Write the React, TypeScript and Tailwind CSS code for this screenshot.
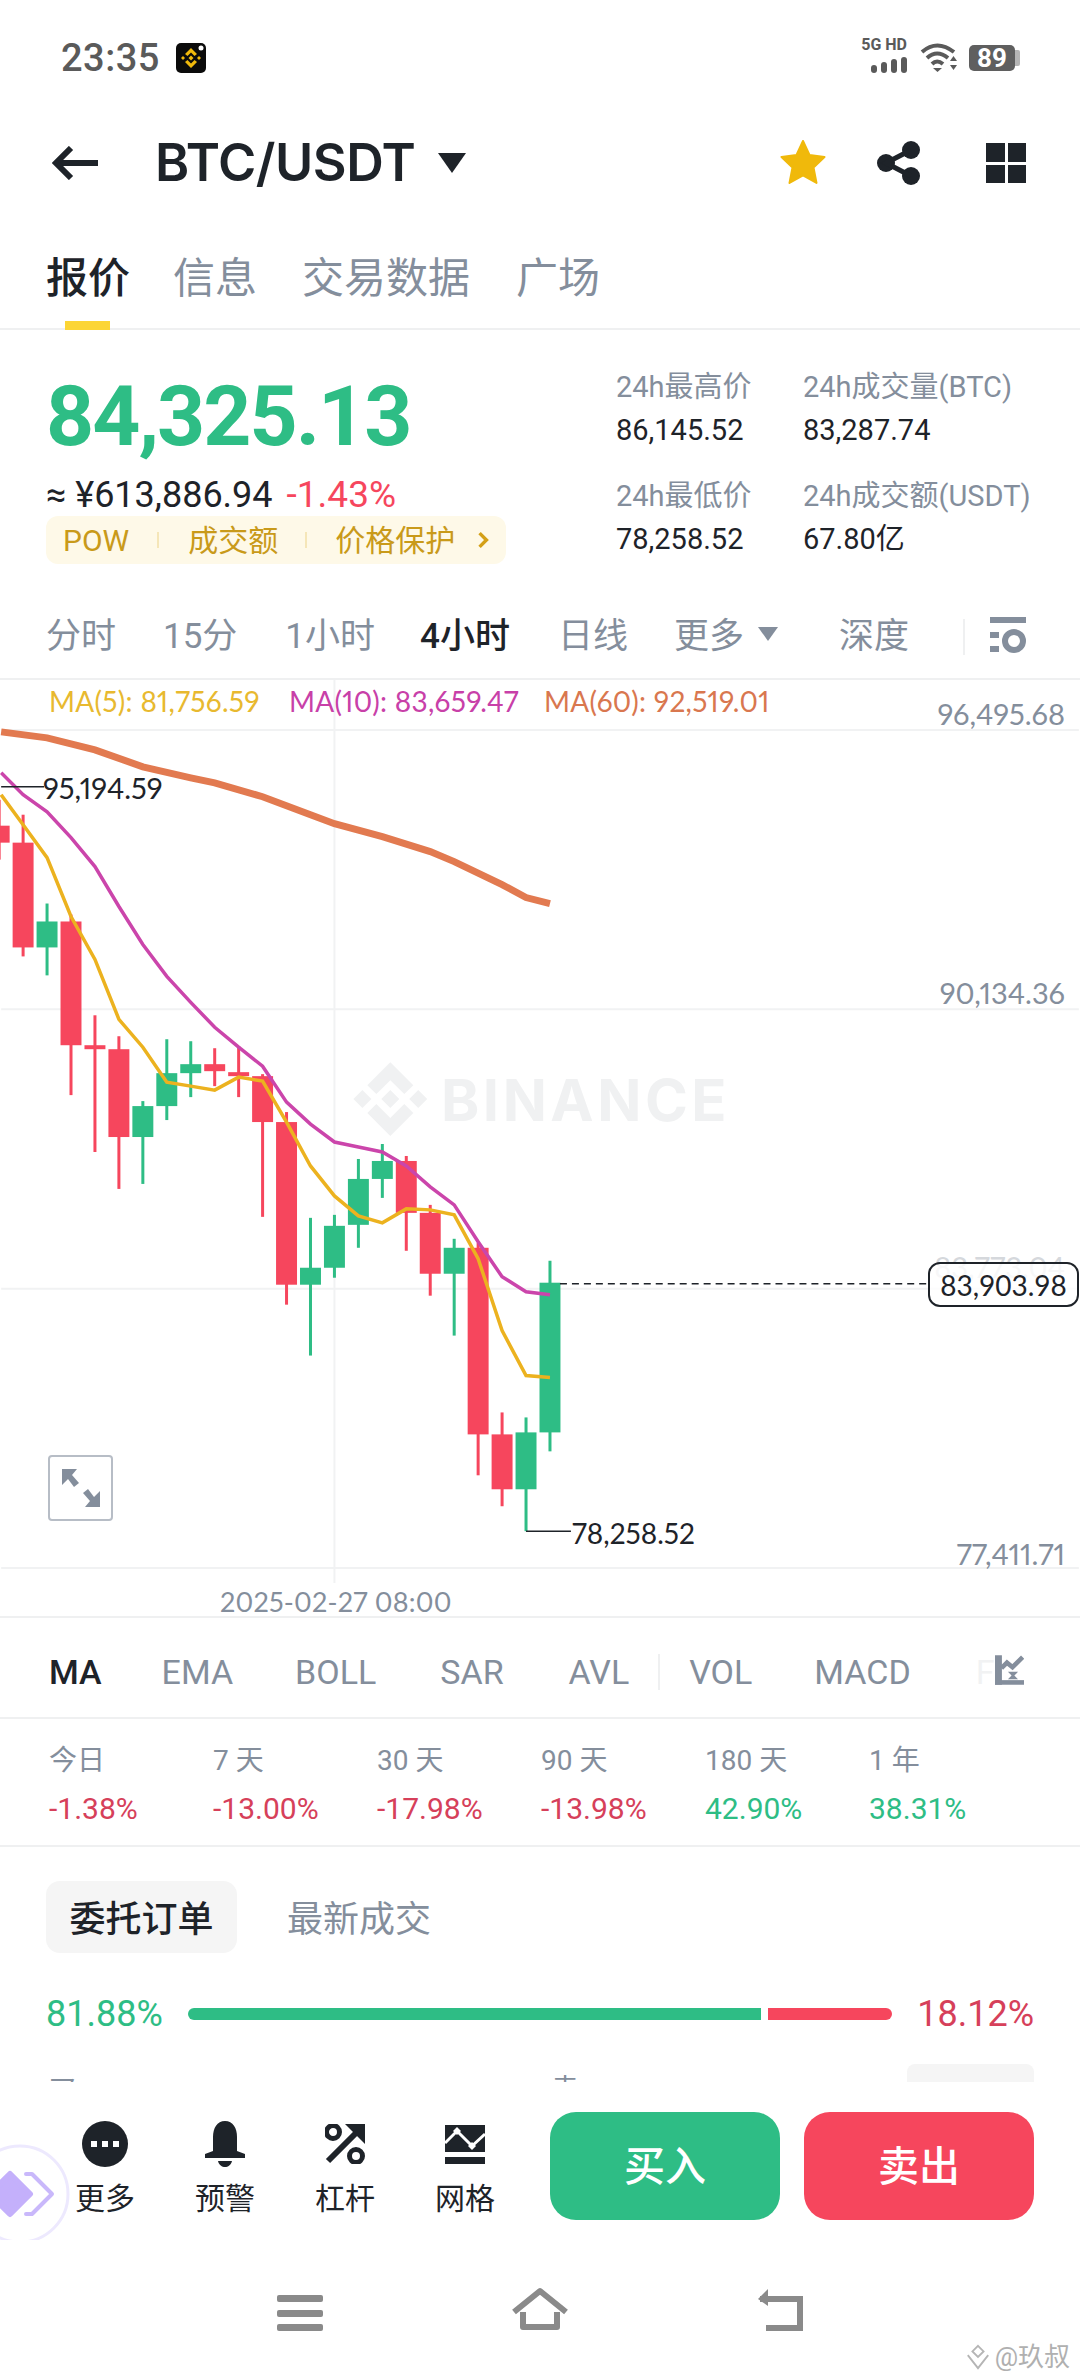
import React from "react";

const GREEN = "#2ebd85";
const RED = "#f6465d";

// x centre index step 24px, starting at x=-2: [high, top, bottom, low, green?]
const candles: [number, number, number, number, number][] = [
  [800, 826, 843, 860, 0],
  [815, 843, 948, 957, 0],
  [904, 922, 948, 976, 1],
  [915, 922, 1046, 1096, 0],
  [1016, 1046, 1050, 1153, 0],
  [1037, 1050, 1138, 1190, 0],
  [1102, 1107, 1138, 1185, 1],
  [1040, 1074, 1107, 1121, 1],
  [1042, 1065, 1074, 1098, 1],
  [1049, 1065, 1072, 1087, 0],
  [1047, 1073, 1077, 1098, 0],
  [1075, 1077, 1123, 1218, 0],
  [1113, 1123, 1286, 1306, 0],
  [1219, 1269, 1286, 1357, 1],
  [1216, 1227, 1269, 1279, 1],
  [1160, 1180, 1226, 1249, 1],
  [1145, 1162, 1180, 1199, 1],
  [1157, 1162, 1214, 1252, 0],
  [1206, 1214, 1275, 1297, 0],
  [1240, 1249, 1275, 1337, 1],
  [1244, 1249, 1436, 1477, 0],
  [1414, 1436, 1491, 1508, 0],
  [1419, 1434, 1491, 1533, 1],
  [1262, 1284, 1434, 1453, 1],
];

const ma5 = "0,795 22,825 46,858 70,917 94,960 118,1020 142,1048 166,1083 190,1087 214,1091 238,1078 262,1082 286,1123 310,1167 334,1197 358,1217 382,1224 406,1210 430,1211 454,1216 478,1260 502,1332 526,1377 550,1379";
const ma10 = "0,773 22,795 46,812 70,838 94,867 118,907 142,945 166,977 190,1003 214,1028 238,1048 262,1067 286,1103 310,1125 334,1143 358,1148 382,1153 406,1167 430,1188 454,1206 478,1243 502,1278 526,1293 550,1296";
const ma60 = "0,732 46,738 94,750 142,767 190,778 214,783 262,797 310,815 334,824 382,837 430,852 454,862 502,885 526,898 550,904";

const Chart = () => (
  <svg viewBox="0 680 1080 938" className="absolute inset-0 w-full h-full">
    {[730, 1010, 1290, 1570].map((y) => (
      <line key={y} x1="0" x2="1080" y1={y} y2={y} stroke="#f1f2f3" strokeWidth="2" />
    ))}
    <line x1="334" x2="334" y1="680" y2="1585" stroke="#f1f2f3" strokeWidth="2" />
    <g fill="#f0f1f2">
      <polygon points="390,1063 413,1086 404,1095 390,1081 376,1095 367,1086" />
      <polygon points="390,1137 413,1114 404,1105 390,1119 376,1105 367,1114" />
      <polygon points="390,1091 399,1100 390,1109 381,1100" />
      <polygon points="362,1091 371,1100 362,1109 353,1100" />
      <polygon points="418,1091 427,1100 418,1109 409,1100" />
    </g>
    {candles.map(([h, t, b, l, g], i) => {
      const x = -2 + i * 24;
      const c = g ? GREEN : RED;
      return (
        <g key={i} fill={c}>
          <rect x={x - 1.5} y={h} width="3" height={l - h} />
          <rect x={x - 10.5} y={t} width="21" height={b - t} />
        </g>
      );
    })}
    <polyline points={ma60} fill="none" stroke="#e27a50" strokeWidth="7" />
    <polyline points={ma10} fill="none" stroke="#cb45ab" strokeWidth="3.5" />
    <polyline points={ma5} fill="none" stroke="#ecb21f" strokeWidth="3.5" />
    <line x1="0" x2="43" y1="787" y2="787" stroke="#1e2329" strokeWidth="1.5" />
    <line x1="526" x2="571" y1="1533" y2="1533" stroke="#1e2329" strokeWidth="1.5" />
    <line x1="560" x2="928" y1="1285" y2="1285" stroke="#1e2329" strokeWidth="1.5" strokeDasharray="7 5" />
  </svg>
);

const Label = ({ cls, children }: { cls: string; children: React.ReactNode }) => (
  <span className={`absolute whitespace-nowrap leading-none proportional-nums ${cls}`}>{children}</span>
);

const Stat = ({ label, value }: { label: string; value: string }) => (
  <div className="flex flex-col">
    <span className="text-[29px] leading-[34px] text-[#848e9c] whitespace-nowrap">{label}</span>
    <span className="text-[29px] leading-[34px] mt-[9px] text-[#1e2329] whitespace-nowrap">{value}</span>
  </div>
);

const Returns = ({ label, value, up }: { label: string; value: string; up?: boolean }) => (
  <div className="flex flex-col">
    <span className="text-[28px] leading-[34px] text-[#848e9c] whitespace-nowrap">{label}</span>
    <span className={`text-[30px] leading-[34px] mt-[14px] whitespace-nowrap ${up ? "text-[#2ebd85]" : "text-[#d6405a]"}`}>{value}</span>
  </div>
);

const Tool = ({ icon, label }: { icon: React.ReactNode; label: string }) => (
  <div className="w-[120px] mt-[9px] flex flex-col items-center">
    <div className="h-[46px] flex items-center justify-center">{icon}</div>
    <span className="mt-[14px] text-[30px] leading-[36px] text-[#1e2329] whitespace-nowrap">{label}</span>
  </div>
);

export default function App() {
  return (
    <div
      className="w-[1080px] h-[2376px] bg-white overflow-hidden flex flex-col relative"
      style={{ fontFamily: 'Roboto, "Noto Sans CJK SC", sans-serif' }}
    >
      {/* status bar */}
      <div className="h-[100px] shrink-0 flex items-start pl-[61px] pr-[60px] pt-[38px]">
        <span className="text-[38px] leading-[40px] tracking-[0.5px] font-medium text-[#5a5a5a]">23:35</span>
        <svg viewBox="0 0 30 30" className="w-[30px] h-[30px] ml-[16px] mt-[5px]">
          <rect width="30" height="30" rx="5" fill="#0b0b0b" />
          <g fill="#f0b90b">
            <polygon points="15,5 21,11 18.5,13 15,9.5 11.500,13 9,11" />
            <polygon points="15,25 21,19 18.5,17 15,20.500 11.500,17 9,19" />
            <polygon points="15,12.500 17.500,15 15,17.500 12.500,15" />
            <polygon points="7,13 9,15 7,17 5,15" />
            <polygon points="23,13 25,15 23,17 21,15" />
          </g>
          <circle cx="25" cy="5" r="2.500" fill="#fff" />
        </svg>
        <div className="ml-auto flex items-start">
          <div className="flex flex-col items-end w-[48px] mt-[0px]">
            <span className="text-[16px] leading-[14px] font-bold text-[#5a5a5a] whitespace-nowrap">5G HD</span>
            <svg viewBox="0 0 36 16" className="w-[36px] h-[16px] mt-[5px]">
              <g fill="#5a5a5a">
                <rect x="0" y="8" width="6" height="8" rx="3" />
                <rect x="10" y="5" width="6" height="11" rx="3" />
                <rect x="20" y="2" width="6" height="14" rx="3" />
                <rect x="30" y="0" width="6" height="16" rx="3" />
              </g>
            </svg>
          </div>
          <svg viewBox="0 0 38 30" className="w-[38px] h-[30px] ml-[13px] mt-[5px]" fill="none" stroke="#5a5a5a" strokeWidth="4">
            <path d="M2 9 Q17 -4 34 9" />
            <path d="M7 15 Q17 6 28 15" />
            <path d="M12 21 Q17 16 23 21" />
            <polygon points="13,25 22,25 17.500,29" fill="#5a5a5a" stroke="none" />
            <polygon points="30,18 37,18 33.500,13" fill="#5a5a5a" stroke="none" />
            <polygon points="30,22 37,22 33.500,27" fill="#5a5a5a" stroke="none" />
          </svg>
          <div className="ml-[11px] mt-[7px] flex items-center">
            <div className="w-[46px] h-[26px] rounded-[5px] bg-[#5f5f5f] flex items-center justify-center text-white text-[26px] font-bold leading-none">89</div>
            <div className="w-[5px] h-[16px] bg-[#b5b5b5] rounded-r-[2px]" />
          </div>
        </div>
      </div>

      {/* nav */}
      <div className="h-[126px] shrink-0 flex items-center pb-[0px]">
        <svg viewBox="0 0 46 34" className="w-[46px] h-[34px] ml-[52px]" fill="none" stroke="#1e2329" strokeWidth="6">
          <path d="M46 17H5" />
          <path d="M19 2L4 17l15 15" />
        </svg>
        <span className="ml-[57px] text-[52px] leading-[56px] font-semibold tracking-[-0.5px] text-[#1e2329]" style={{ fontFamily: "Inter, sans-serif" }}>BTC/USDT</span>
        <svg viewBox="0 0 28 20" className="w-[28px] h-[20px] ml-[23px]"><polygon points="0,0 28,0 14,20" fill="#1e2329" /></svg>
        <svg viewBox="0 0 46 46" className="w-[46px] h-[46px] ml-auto">
          <path d="M23 1l6.500 14 15 2-11 10.500 3 15.500L23 35.500 9.500 43l3-15.500L1.500 17l15-2z" fill="#f0b90b" stroke="#f0b90b" strokeWidth="2" strokeLinejoin="round" />
        </svg>
        <svg viewBox="0 0 44 44" className="w-[44px] h-[44px] ml-[51px]" fill="#1e2329">
          <circle cx="34" cy="9" r="9" /><circle cx="9" cy="22" r="9" /><circle cx="34" cy="35" r="9" />
          <path d="M34 9L9 22l25 13" fill="none" stroke="#1e2329" strokeWidth="5" />
        </svg>
        <div className="grid grid-cols-2 gap-[3px] w-[40px] h-[40px] ml-[65px] mr-[54px]">
          <div className="bg-[#1e2329]" /><div className="bg-[#1e2329]" /><div className="bg-[#1e2329]" /><div className="bg-[#1e2329]" />
        </div>
      </div>

      {/* tabs */}
      <div className="h-[104px] shrink-0 border-b-2 border-[#eff0f1] flex items-start pl-[46px] pt-[24px] text-[42px] leading-[58px] text-[#848e9c]">
        <div className="relative h-[80px]">
          <span className="font-medium text-[#1e2329]">报价</span>
          <div className="absolute left-[19px] bottom-0 w-[45px] h-[9px] bg-[#fcd535]" />
        </div>
        <span className="ml-[43px]">信息</span>
        <span className="ml-[45px]">交易数据</span>
        <span className="ml-[46px]">广场</span>
      </div>

      {/* price block */}
      <div className="h-[259px] shrink-0 flex pl-[46px]">
        <div className="w-[570px] shrink-0 pt-[43px]">
          <div className="text-[84px] leading-[88px] font-bold text-[#2ebd85] whitespace-nowrap tracking-[-2px]">84,325.13</div>
          <div className="mt-[15px] flex items-center text-[35px] leading-[38px] whitespace-nowrap">
            <span className="text-[#1e2329] text-[36px]">≈ ¥613,886.94</span>
            <span className="ml-[14px] text-[#f6465d] text-[37px]">-1.43%</span>
          </div>
          <div className="mt-[2px] w-[460px] h-[48px] rounded-[12px] bg-[#fef9e8] flex items-center pl-[17px] text-[30px] text-[#c99a1a] whitespace-nowrap">
            <span>POW</span>
            <span className="ml-[28px] w-[2px] h-[16px] bg-[#f5e6b8]" />
            <span className="ml-[29px]">成交额</span>
            <span className="ml-[27px] w-[2px] h-[16px] bg-[#f5e6b8]" />
            <span className="ml-[28px]">价格保护</span>
            <svg viewBox="0 0 14 20" className="w-[12px] h-[18px] ml-[22px]" fill="none" stroke="#d4a017" strokeWidth="4"><path d="M3 2l8 8-8 8" /></svg>
          </div>
        </div>
        <div className="pt-[40px] grid grid-cols-[187px_auto] gap-y-[32px] content-start">
          <Stat label="24h最高价" value="86,145.52" />
          <Stat label="24h成交量(BTC)" value="83,287.74" />
          <Stat label="24h最低价" value="78,258.52" />
          <Stat label="24h成交额(USDT)" value="67.80亿" />
        </div>
      </div>

      {/* intervals */}
      <div className="h-[91px] shrink-0 border-b-2 border-[#eff0f1] flex items-center text-[35px] text-[#848e9c] whitespace-nowrap leading-none pt-[6px]">
        <span className="ml-[46px]">分时</span>
        <span className="ml-[47px]">15分</span>
        <span className="ml-[48px]">1小时</span>
        <span className="ml-[45px] font-medium text-[#1e2329]">4小时</span>
        <span className="ml-[48px]">日线</span>
        <span className="ml-[46px]">更多</span>
        <svg viewBox="0 0 20 14" className="w-[20px] h-[14px] ml-[14px] mb-[6px]"><polygon points="0,0 20,0 10,14" fill="#848e9c" /></svg>
        <span className="ml-[61px]">深度</span>
        <span className="ml-[54px] w-[2px] h-[36px] bg-[#eff0f1]" />
        <svg viewBox="0 0 36 36" className="w-[36px] h-[36px] ml-[25px] mb-[4px]" fill="#848e9c">
          <rect x="0" y="0" width="36" height="6" />
          <rect x="0" y="15" width="9" height="6" />
          <rect x="0" y="29" width="9" height="6" />
          <circle cx="24" cy="24" r="9" fill="none" stroke="#848e9c" strokeWidth="6" />
        </svg>
      </div>

      {/* chart */}
      <div className="h-[938px] shrink-0 relative border-b-2 border-[#eff0f1]">
        <Chart />
        <div className="relative flex text-[28px] tracking-[0.3px] leading-[32px] pt-[5px] pl-[49px] whitespace-nowrap proportional-nums" style={{ fontFamily: "Lato, sans-serif" }}>
          <span className="text-[#e8b92f] w-[240px]">MA(5): 81,756.59</span>
          <span className="text-[#c840a8] w-[255px]">MA(10): 83,659.47</span>
          <span className="text-[#d9774f]">MA(60): 92,519.01</span>
        </div>
        <span
          className="absolute left-[441px] top-[386px] text-[58px] leading-[68px] font-bold tracking-[3.5px] text-[#f0f1f2]"
          style={{ fontFamily: "Inter, sans-serif" }}
        >BINANCE</span>
        <div style={{ fontFamily: "Lato, sans-serif" }}>
          <Label cls="right-[15px] top-[19px] text-[29px] text-[#848e9c]">96,495.68</Label>
          <Label cls="right-[15px] top-[298px] text-[29px] text-[#848e9c]">90,134.36</Label>
          <Label cls="right-[15px] top-[859px] text-[29px] text-[#848e9c]">77,411.71</Label>
          <Label cls="right-[15px] top-[572px] text-[29px] text-[#d5d8dc]">83,773.04</Label>
          <Label cls="left-[43px] top-[93px] text-[29px] text-[#1e2329]">95,194.59</Label>
          <Label cls="left-[572px] top-[839px] text-[28px] text-[#1e2329]">78,258.52</Label>
          <Label cls="left-[220px] top-[908px] text-[27px] tracking-[0.2px] text-[#848e9c]">2025-02-27 08:00</Label>
          <div className="absolute left-[928px] top-[582px] w-[151px] h-[45px] rounded-[12px] border-2 border-[#1e2329] bg-white/80 flex items-center justify-center text-[28px] text-[#1e2329] leading-none">83,903.98</div>
        </div>
        <div className="absolute left-[48px] top-[775px] w-[65px] h-[66px] rounded-[4px] border-2 border-[#b7bdc6] flex items-center justify-center">
          <svg viewBox="0 0 38 38" className="w-[38px] h-[38px]" fill="#848e9c">
            <polygon points="0,0 15,0 10,6 17,14 12,18 6,10 0,16" />
            <polygon points="38,38 23,38 28,32 21,24 26,20 32,28 38,22" />
          </svg>
        </div>
      </div>

      {/* indicators */}
      <div className="h-[101px] shrink-0 border-b-2 border-[#eff0f1] flex items-center text-[34px] text-[#848e9c] whitespace-nowrap leading-none pt-[8px]">
        <span className="ml-[49px] font-medium text-[#1e2329]">MA</span>
        <span className="ml-[60px]">EMA</span>
        <span className="ml-[62px]">BOLL</span>
        <span className="ml-[64px]">SAR</span>
        <span className="ml-[65px]">AVL</span>
        <span className="ml-[29px] w-[2px] h-[36px] bg-[#eff0f1]" />
        <span className="ml-[29px]">VOL</span>
        <span className="ml-[62px]">MACD</span>
        <span className="ml-[65px] text-[#f1f2f3]">F</span>
        <svg viewBox="0 0 32 32" className="w-[32px] h-[32px] ml-auto mr-[56px] mb-[4px]" fill="#848e9c">
          <rect x="0" y="0" width="7.500" height="32" />
          <rect x="0" y="27" width="32" height="5" />
          <polyline points="7,14 13,8 19,13 30,2" fill="none" stroke="#848e9c" strokeWidth="5" />
          <polygon points="14,18 25,18 21,22 25,26 14,26 18,22" />
        </svg>
      </div>

      {/* returns */}
      <div className="h-[128px] shrink-0 border-b-2 border-[#eff0f1] grid grid-cols-[164px_164px_164px_164px_164px_auto] pl-[49px] pt-[25px]">
        <Returns label="今日" value="-1.38%" />
        <Returns label="7 天" value="-13.00%" />
        <Returns label="30 天" value="-17.98%" />
        <Returns label="90 天" value="-13.98%" />
        <Returns label="180 天" value="42.90%" up />
        <Returns label="1 年" value="38.31%" up />
      </div>

      {/* order book, cut by the bottom bar */}
      <div className="flex-1 min-h-0 overflow-hidden px-[46px] pt-[34px]">
        <div className="flex items-center">
          <div className="w-[191px] h-[72px] rounded-[14px] bg-[#f5f5f5] flex items-center justify-center pt-[6px] text-[36px] leading-none font-medium text-[#1e2329]">委托订单</div>
          <span className="ml-[50px] pt-[6px] text-[36px] leading-none text-[#848e9c]">最新成交</span>
        </div>
        <div className="mt-[44px] flex items-center h-[34px]">
          <span className="w-[142px] text-[36px] leading-none text-[#2ebd85]">81.88%</span>
          <div className="w-[573px] h-[12px] rounded-l-full bg-[#2ebd85]" />
          <div className="w-[124px] h-[12px] ml-[7px] rounded-r-full bg-[#f6465d]" />
          <span className="ml-auto text-[36px] leading-none text-[#d6405a]">18.12%</span>
        </div>
        <div className="mt-[33px] flex text-[28px] leading-[34px] text-[#848e9c]">
          <span className="mt-[11px] ml-[2px]">买</span>
          <span className="ml-[475px] mt-[9px]">卖</span>
          <div className="ml-auto w-[127px] h-[52px] rounded-[8px] bg-[#f5f5f5]" />
        </div>
      </div>

      {/* bottom actions */}
      <div className="h-[158px] shrink-0 bg-white flex items-start pt-[30px] pl-[45px] pr-[46px] relative">
        <Tool
          label="更多"
          icon={
            <svg viewBox="0 0 46 46" className="w-[46px] h-[46px]">
              <circle cx="23" cy="23" r="23" fill="#1e2329" />
              <g fill="#fff"><rect x="9" y="20" width="6" height="6" /><rect x="20" y="20" width="6" height="6" /><rect x="31" y="20" width="6" height="6" /></g>
            </svg>
          }
        />
        <Tool
          label="预警"
          icon={
            <svg viewBox="0 0 40 46" className="w-[40px] h-[46px]" fill="#1e2329">
              <path d="M20 0C28 0 32 7 32 16V30L40 33V37H0V33L8 30V16C8 7 12 0 20 0Z" />
              <path d="M13 40H27C26 44 23 46 20 46S14 44 13 40Z" />
            </svg>
          }
        />
        <Tool
          label="杠杆"
          icon={
            <svg viewBox="0 0 40 40" className="w-[40px] h-[40px]" fill="none" stroke="#1e2329">
              <path d="M3 37L31 9" strokeWidth="6" />
              <polygon points="20,0 40,0 40,20" fill="#1e2329" stroke="none" />
              <circle cx="8" cy="8" r="6.500" strokeWidth="5" />
              <circle cx="31" cy="32" r="6.500" strokeWidth="5" />
            </svg>
          }
        />
        <Tool
          label="网格"
          icon={
            <svg viewBox="0 0 40 39" className="w-[40px] h-[39px]" fill="#1e2329">
              <rect x="0" y="0" width="40" height="27" />
              <polyline points="0,18 12,6 27,21 40,9" fill="none" stroke="#fff" strokeWidth="3" />
              <g fill="#fff">
                <polygon points="12,2 16,6 12,10 8,6" />
                <polygon points="27,17 31,21 27,25 23,21" />
              </g>
              <rect x="0" y="32" width="40" height="7" />
            </svg>
          }
        />
        <button className="ml-[25px] w-[230px] h-[108px] rounded-[26px] bg-[#2ebd85] text-white text-[41px] font-medium pt-[3px]">买入</button>
        <button className="ml-[24px] w-[230px] h-[108px] rounded-[26px] bg-[#f6465d] text-white text-[41px] font-medium pt-[3px]">卖出</button>
        <svg viewBox="0 0 72 100" className="absolute left-0 top-[62px] w-[72px] h-[100px]">
          <circle cx="20" cy="50" r="48" fill="#fff" stroke="#ede9fe" strokeWidth="3" />
          <polygon points="10,30 30,50 10,70 -10,50" fill="#c4b0fb" stroke="#c4b0fb" strokeWidth="6" strokeLinejoin="round" />
          <path d="M26 30 L32 30 L52 50 L32 70 L26 70" fill="none" stroke="#c9b8fb" strokeWidth="4" strokeLinejoin="round" strokeLinecap="round" />
        </svg>
      </div>

      {/* system nav */}
      <div className="h-[136px] shrink-0 bg-white relative flex items-start">
        <svg viewBox="0 0 46 36" className="w-[46px] h-[36px] ml-[277px] mt-[55px]" fill="#8a8a8a">
          <rect width="46" height="7" y="0" rx="2" /><rect width="46" height="7" y="15" rx="2" /><rect width="46" height="7" y="29" rx="2" />
        </svg>
        <svg viewBox="0 0 58 44" className="w-[58px] h-[44px] ml-[188px] mt-[47px]" fill="none" stroke="#8a8a8a" strokeWidth="6" strokeLinejoin="round">
          <path d="M3 25L29 4l26 21" />
          <path d="M12 25V40H46V25" />
        </svg>
        <svg viewBox="0 0 48 44" className="w-[48px] h-[44px] ml-[187px] mt-[48px]" fill="none" stroke="#8a8a8a" strokeWidth="6">
          <path d="M4 11H44V40H10" />
          <polygon points="2,11 12,1 12,18" fill="#8a8a8a" stroke="none" />
        </svg>
        <div className="absolute right-[10px] top-[104px] flex items-center text-[26px] leading-none text-[#b0b0b0]">
          <svg viewBox="0 0 28 28" className="w-[26px] h-[26px] mr-[4px]" fill="none" stroke="#b5b5b5" strokeWidth="2">
            <path d="M14 2l6 6-6 6-6-6zM3 12l11 14 11-14" />
          </svg>
          @玖叔
        </div>
      </div>
    </div>
  );
}
